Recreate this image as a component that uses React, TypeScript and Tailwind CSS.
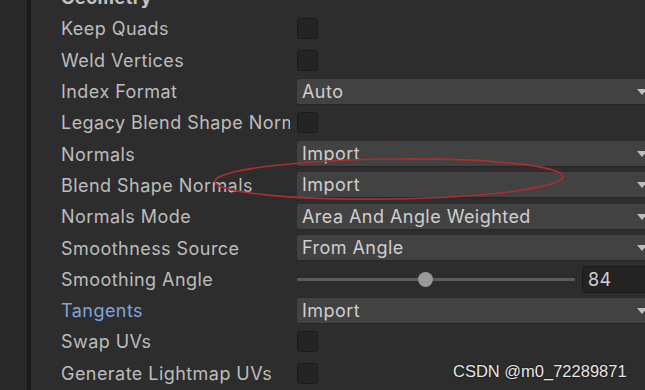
import React from "react";

type Row =
  | { label: string; kind: "check"; blue?: boolean }
  | { label: string; kind: "drop"; value: string; blue?: boolean }
  | { label: string; kind: "slider"; value: string; blue?: boolean };

const rows: Row[] = [
  { label: "Keep Quads", kind: "check" },
  { label: "Weld Vertices", kind: "check" },
  { label: "Index Format", kind: "drop", value: "Auto" },
  { label: "Legacy Blend Shape Normals", kind: "check" },
  { label: "Normals", kind: "drop", value: "Import" },
  { label: "Blend Shape Normals", kind: "drop", value: "Import" },
  { label: "Normals Mode", kind: "drop", value: "Area And Angle Weighted" },
  { label: "Smoothness Source", kind: "drop", value: "From Angle" },
  { label: "Smoothing Angle", kind: "slider", value: "84" },
  { label: "Tangents", kind: "drop", value: "Import", blue: true },
  { label: "Swap UVs", kind: "check" },
  { label: "Generate Lightmap UVs", kind: "check" },
];

function Field({ row }: { row: Row }) {
  if (row.kind === "check") {
    return (
      <div className="w-[21px] h-[21px] rounded-[3px] bg-[#242424] border border-[#1b1b1b]" />
    );
  }
  if (row.kind === "drop") {
    return (
      <div className="flex-1 h-[26px] rounded-[3px] bg-[#424242] border-b border-[#262626] flex items-center pl-[5px] text-[#cfcfcf] relative">
        <span>{row.value}</span>
        <svg className="absolute right-[6px] top-[10px]" width="10" height="7" viewBox="0 0 10 7">
          <polygon points="0,0 10,0 5,6" fill="#bdbdbd" />
        </svg>
      </div>
    );
  }
  return (
    <div className="flex-1 flex items-center gap-[7px]">
      <div className="relative flex-1 h-[26px] flex items-center">
        <div className="w-full h-[3px] rounded-full bg-[#5c5c5c]" />
        <div className="absolute left-[121px] top-[6px] w-[15px] h-[15px] rounded-full bg-[#999999]" />
      </div>
      <div className="w-[71px] h-[27px] rounded-[4px] bg-[#232323] border border-[#1a1a1a] flex items-center pl-[5px] text-[#d0d0d0]">
        {row.value}
      </div>
    </div>
  );
}

export default function App() {
  return (
    <div
      className="w-[645px] h-[390px] overflow-hidden bg-[#2d2d2d] flex relative"
      style={{ fontFamily: "Inter, 'Noto Sans', sans-serif" }}
    >
      <div className="w-[27px] h-full bg-[#282828] shrink-0" />
      <div className="w-[4px] h-full bg-[#191919] shrink-0" />
      <div className="flex-1 flex flex-col mt-[-18px] text-[18px] tracking-[0.45px] mr-[-8px]">
        <div className="h-[31.3px] flex items-center pl-[30px] font-bold text-[#c4c4c4]">
          Geometry
        </div>
        {rows.map((r) => (
          <div key={r.label} className="h-[31.3px] flex items-center">
            <div
              className={
                "w-[259px] pl-[30px] whitespace-nowrap overflow-hidden shrink-0 " +
                (r.blue ? "text-[#7ea6dc]" : "text-[#bdbdbd]")
              }
            >
              {r.label}
            </div>
            <div className="flex-1 flex items-center pl-[7px]">
              <Field row={r} />
            </div>
          </div>
        ))}
      </div>
      <svg className="absolute left-0 top-0 pointer-events-none" width="645" height="390">
        <ellipse cx="389" cy="179" rx="174" ry="20" fill="none" stroke="#a8302f" strokeWidth="1.6" transform="rotate(-0.8 389 179)" />
      </svg>
      <div
        className="absolute left-[453px] top-[359px] text-[16.5px] text-[#e8e8e8]"
        style={{ fontFamily: "'Liberation Sans', Arial, sans-serif", textShadow: "0 0 2px #000" }}
      >
        CSDN @m0_72289871
      </div>
    </div>
  );
}
